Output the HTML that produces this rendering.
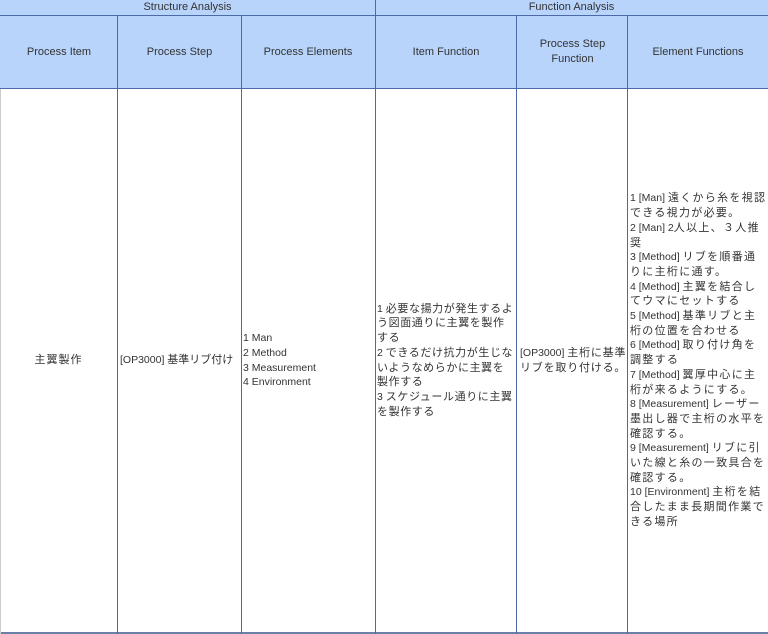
<!DOCTYPE html>
<html><head><meta charset="utf-8"><style>
html,body{margin:0;padding:0;width:768px;height:634px;overflow:hidden;background:#fff;}
body{font-family:"Liberation Sans","Noto Sans CJK JP",sans-serif;color:#333;font-size:11px;}
.c{position:absolute;box-sizing:border-box;}
.h{background:#b8d4fb;text-align:center;color:#333;}
.vl{position:absolute;width:1px;background:#4a6aa8;}
.hl{position:absolute;height:1px;background:#4a6aa8;}
.t{position:absolute;display:flex;align-items:center;line-height:14.7px;white-space:nowrap;}
.e{letter-spacing:0;font-size:10.5px;}
</style></head><body>
<div class="c h" style="left:0;top:0;width:768px;height:89px;"></div>
<div class="c" style="left:0;top:0;width:375px;height:15px;text-align:center;line-height:14px;">Structure Analysis</div>
<div class="c" style="left:375px;top:0;width:393px;height:15px;text-align:center;line-height:14px;">Function Analysis</div>
<div class="t" style="left:0;top:15px;width:118px;height:74px;justify-content:center;">Process Item</div>
<div class="t" style="left:118px;top:15px;width:123px;height:74px;justify-content:center;">Process Step</div>
<div class="t" style="left:241px;top:15px;width:134px;height:74px;justify-content:center;">Process Elements</div>
<div class="t" style="left:375px;top:15px;width:142px;height:74px;justify-content:center;">Item Function</div>
<div class="t" style="left:517px;top:15px;width:111px;height:74px;justify-content:center;text-align:center;">Process Step<br>Function</div>
<div class="t" style="left:628px;top:15px;width:140px;height:74px;justify-content:center;">Element Functions</div>

<div class="hl" style="left:0;top:15px;width:768px;"></div>
<div class="hl" style="left:0;top:88px;width:768px;"></div>
<div class="hl" style="left:0;top:632px;width:768px;height:2px;background:#6b7fa8;"></div>
<div class="vl" style="left:375px;top:0;height:634px;"></div>
<div class="vl" style="left:117px;top:15px;height:619px;"></div>
<div class="vl" style="left:241px;top:15px;height:619px;"></div>
<div class="vl" style="left:516px;top:15px;height:619px;"></div>
<div class="vl" style="left:627px;top:15px;height:619px;"></div>
<div class="vl" style="left:0;top:89px;height:545px;background:#ccc;"></div>

<div class="t" style="left:0;top:89px;width:117px;height:543px;justify-content:center;letter-spacing:1px;">主翼製作</div>
<div class="t" style="left:120px;top:89px;width:121px;height:543px;"><span class="e">[OP3000]&nbsp;</span>基準リブ付け</div>
<div class="t" style="left:243px;top:89px;width:132px;height:543px;"><div class="e">1 Man<br>2 Method<br>3 Measurement<br>4 Environment</div></div>
<div class="t" style="left:377px;top:89px;width:139px;height:543px;letter-spacing:0.6px;"><div><span class="e">1 </span>必要な揚力が発生するよ<br>う図面通りに主翼を製作<br>する<br><span class="e">2 </span>できるだけ抗力が生じな<br>いようなめらかに主翼を<br>製作する<br><span class="e">3 </span>スケジュール通りに主翼<br>を製作する</div></div>
<div class="t" style="left:520px;top:89px;width:108px;height:543px;letter-spacing:0.8px;"><div><span class="e">[OP3000] </span>主桁に基準<br>リブを取り付ける。</div></div>
<div class="t" style="left:630px;top:89px;width:138px;height:543px;letter-spacing:1.3px;"><div><span class="e">1 [Man] </span>遠くから糸を視認<br>できる視力が必要。<br><span class="e">2 [Man] 2</span>人以上、３人推<br>奨<br><span class="e">3 [Method] </span>リブを順番通<br>りに主桁に通す。<br><span class="e">4 [Method] </span>主翼を結合し<br>てウマにセットする<br><span class="e">5 [Method] </span>基準リブと主<br>桁の位置を合わせる<br><span class="e">6 [Method] </span>取り付け角を<br>調整する<br><span class="e">7 [Method] </span>翼厚中心に主<br>桁が来るようにする。<br><span class="e">8 [Measurement] </span>レーザー<br>墨出し器で主桁の水平を<br>確認する。<br><span class="e">9 [Measurement] </span>リブに引<br>いた線と糸の一致具合を<br>確認する。<br><span class="e">10 [Environment] </span>主桁を結<br>合したまま長期間作業で<br>きる場所</div></div>
</body></html>
